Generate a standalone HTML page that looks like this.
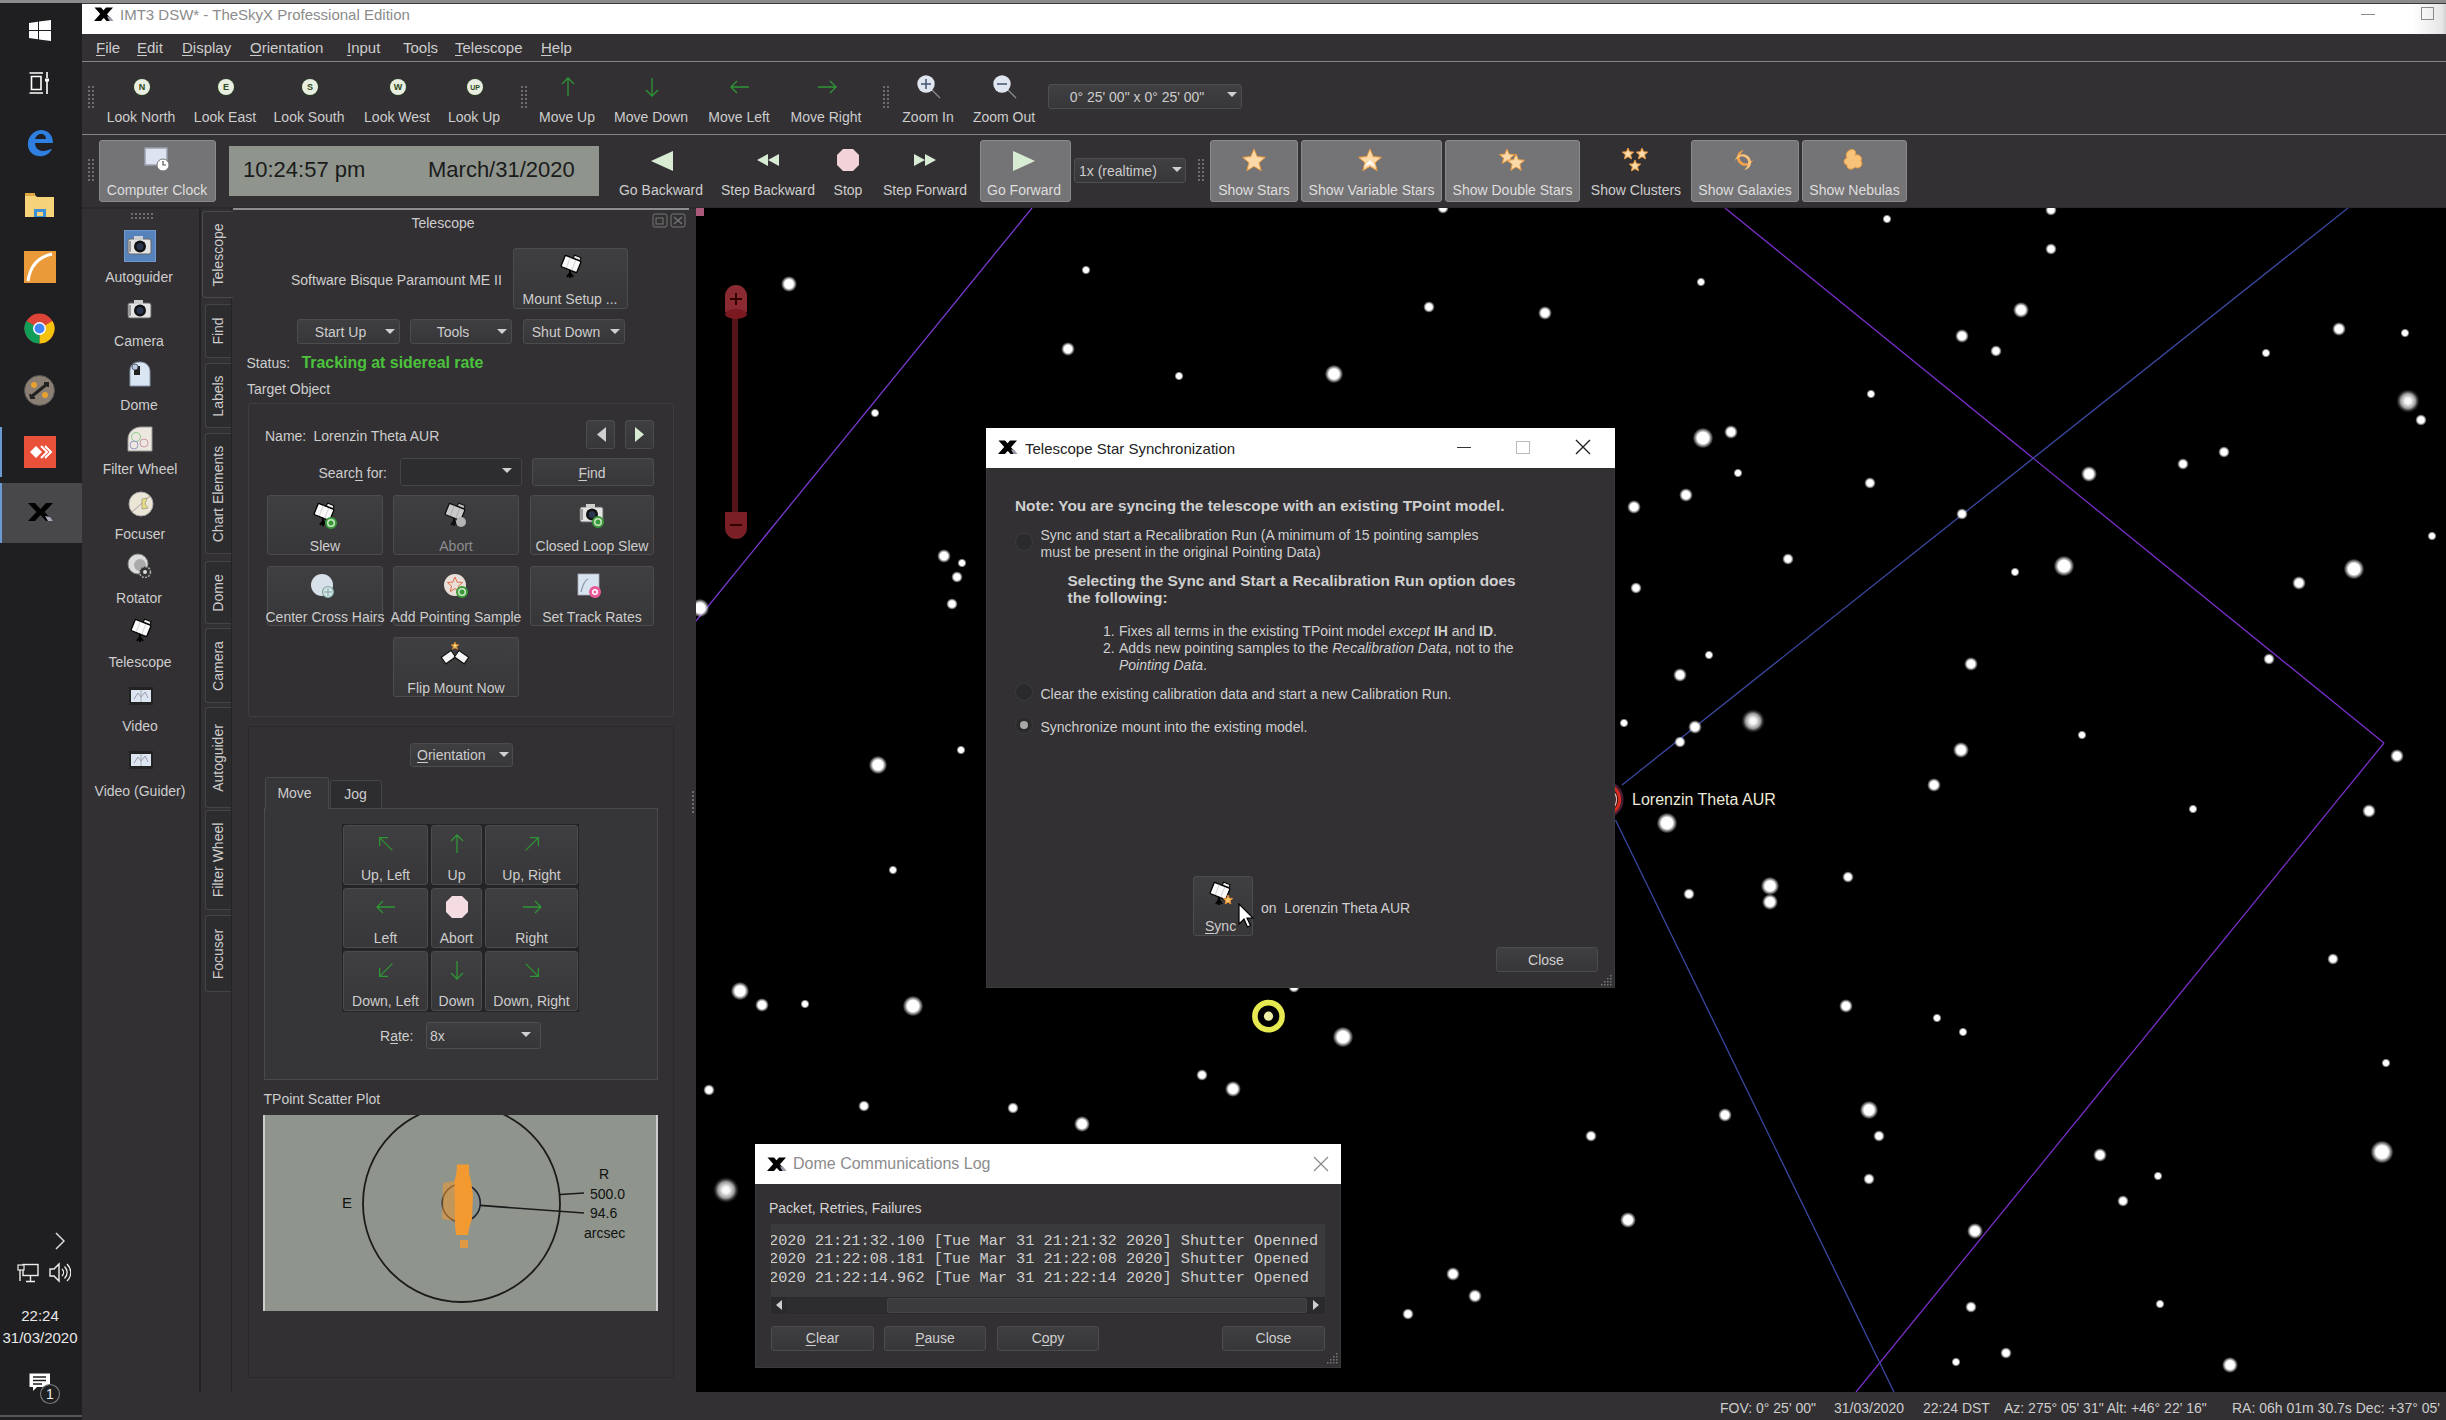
<!DOCTYPE html>
<html><head><meta charset="utf-8">
<style>
*{margin:0;padding:0;box-sizing:border-box}
html,body{width:2446px;height:1420px;overflow:hidden;background:#323033;font-family:"Liberation Sans",sans-serif;color:#d4d4d4}
.a{position:absolute}
.t{position:absolute;white-space:nowrap}
.u{text-decoration:underline;text-underline-offset:2px}
</style></head><body>

<div class="a" style="left:0px;top:0px;width:2446px;height:3px;background:#8b8a8c"></div>
<div class="a" style="left:0px;top:3px;width:82px;height:1417px;background:#1f1e20"></div>
<div class="a" style="left:82px;top:3px;width:2364px;height:31px;background:linear-gradient(to right,#fff 0,#fff 2330px,#e6e6e6 2360px,#d0d0d0 2364px)"></div>
<div class="a" style="left:82px;top:3px;width:2364px;height:1px;background:#3a393b"></div>
<svg class="a" style="left:94px;top:7px;" width="20" height="15" viewBox="0 0 20 15"><path d="M0.5 0.5 L7 0.5 L19 14 L12.5 14 Z" fill="#000"/><path d="M12 0.5 L19 0.5 L7 14 L0 14 Z" fill="#000"/><path d="M13 9.5 L15.5 14 L19.5 14 L16 9.5 Z" fill="#9a9aa8"/></svg>
<div class="t" style="left:120px;top:7.0px;font-size:15px;line-height:15px;color:#8c8c8c;">IMT3 DSW* - TheSkyX Professional Edition</div>
<div class="a" style="left:2361px;top:14px;width:14px;height:1px;background:#8a8a8a"></div>
<div class="a" style="left:2421px;top:7px;width:13px;height:13px;border:1px solid #8a8a8a"></div>
<div class="a" style="left:82px;top:34px;width:2364px;height:27px;background:#323033"></div>
<div class="t" style="left:96px;top:40.0px;font-size:15px;line-height:15px;color:#cdcdcd;"><span class="u">F</span>ile</div>
<div class="t" style="left:137px;top:40.0px;font-size:15px;line-height:15px;color:#cdcdcd;"><span class="u">E</span>dit</div>
<div class="t" style="left:182px;top:40.0px;font-size:15px;line-height:15px;color:#cdcdcd;"><span class="u">D</span>isplay</div>
<div class="t" style="left:250px;top:40.0px;font-size:15px;line-height:15px;color:#cdcdcd;"><span class="u">O</span>rientation</div>
<div class="t" style="left:347px;top:40.0px;font-size:15px;line-height:15px;color:#cdcdcd;"><span class="u">I</span>nput</div>
<div class="t" style="left:403px;top:40.0px;font-size:15px;line-height:15px;color:#cdcdcd;">Too<span class="u">l</span>s</div>
<div class="t" style="left:455px;top:40.0px;font-size:15px;line-height:15px;color:#cdcdcd;"><span class="u">T</span>elescope</div>
<div class="t" style="left:541px;top:40.0px;font-size:15px;line-height:15px;color:#cdcdcd;"><span class="u">H</span>elp</div>
<div class="a" style="left:82px;top:61px;width:2364px;height:1px;background:#858486"></div>
<div class="a" style="left:82px;top:134px;width:2364px;height:1px;background:#858486"></div>
<div class="a" style="left:82px;top:207px;width:2364px;height:2px;background:#2a292b"></div>
<svg class="a" style="left:88px;top:86px;" width="8" height="24" viewBox="0 0 8 24"><rect x="0" y="0" width="2" height="2" fill="#6e6d6f"/><rect x="4" y="0" width="2" height="2" fill="#6e6d6f"/><rect x="0" y="4" width="2" height="2" fill="#6e6d6f"/><rect x="4" y="4" width="2" height="2" fill="#6e6d6f"/><rect x="0" y="8" width="2" height="2" fill="#6e6d6f"/><rect x="4" y="8" width="2" height="2" fill="#6e6d6f"/><rect x="0" y="12" width="2" height="2" fill="#6e6d6f"/><rect x="4" y="12" width="2" height="2" fill="#6e6d6f"/><rect x="0" y="16" width="2" height="2" fill="#6e6d6f"/><rect x="4" y="16" width="2" height="2" fill="#6e6d6f"/><rect x="0" y="20" width="2" height="2" fill="#6e6d6f"/><rect x="4" y="20" width="2" height="2" fill="#6e6d6f"/></svg>
<svg class="a" style="left:132px;top:77px;" width="20" height="20" viewBox="0 0 20 20"><circle cx="10" cy="10" r="9" fill="#2a4a22" opacity="0.6"/><circle cx="10" cy="10" r="8" fill="#e8eee0"/><text x="10" y="13.3" text-anchor="middle" font-family="Liberation Sans" font-weight="bold" font-size="9" fill="#2d4a22">N</text></svg>
<div class="t" style="left:141px;top:110.0px;font-size:14px;line-height:14px;color:#cdcdcd;transform:translateX(-50%);">Look North</div>
<svg class="a" style="left:216px;top:77px;" width="20" height="20" viewBox="0 0 20 20"><circle cx="10" cy="10" r="9" fill="#2a4a22" opacity="0.6"/><circle cx="10" cy="10" r="8" fill="#e8eee0"/><text x="10" y="13.3" text-anchor="middle" font-family="Liberation Sans" font-weight="bold" font-size="9" fill="#2d4a22">E</text></svg>
<div class="t" style="left:225px;top:110.0px;font-size:14px;line-height:14px;color:#cdcdcd;transform:translateX(-50%);">Look East</div>
<svg class="a" style="left:300px;top:77px;" width="20" height="20" viewBox="0 0 20 20"><circle cx="10" cy="10" r="9" fill="#2a4a22" opacity="0.6"/><circle cx="10" cy="10" r="8" fill="#e8eee0"/><text x="10" y="13.3" text-anchor="middle" font-family="Liberation Sans" font-weight="bold" font-size="9" fill="#2d4a22">S</text></svg>
<div class="t" style="left:309px;top:110.0px;font-size:14px;line-height:14px;color:#cdcdcd;transform:translateX(-50%);">Look South</div>
<svg class="a" style="left:388px;top:77px;" width="20" height="20" viewBox="0 0 20 20"><circle cx="10" cy="10" r="9" fill="#2a4a22" opacity="0.6"/><circle cx="10" cy="10" r="8" fill="#e8eee0"/><text x="10" y="13.3" text-anchor="middle" font-family="Liberation Sans" font-weight="bold" font-size="9" fill="#2d4a22">W</text></svg>
<div class="t" style="left:397px;top:110.0px;font-size:14px;line-height:14px;color:#cdcdcd;transform:translateX(-50%);">Look West</div>
<svg class="a" style="left:465px;top:77px;" width="20" height="20" viewBox="0 0 20 20"><circle cx="10" cy="10" r="9" fill="#2a4a22" opacity="0.6"/><circle cx="10" cy="10" r="8" fill="#e8eee0"/><text x="10" y="12.6" text-anchor="middle" font-family="Liberation Sans" font-weight="bold" font-size="7" fill="#2d4a22">UP</text></svg>
<div class="t" style="left:474px;top:110.0px;font-size:14px;line-height:14px;color:#cdcdcd;transform:translateX(-50%);">Look Up</div>
<svg class="a" style="left:521px;top:86px;" width="8" height="24" viewBox="0 0 8 24"><rect x="0" y="0" width="2" height="2" fill="#6e6d6f"/><rect x="4" y="0" width="2" height="2" fill="#6e6d6f"/><rect x="0" y="4" width="2" height="2" fill="#6e6d6f"/><rect x="4" y="4" width="2" height="2" fill="#6e6d6f"/><rect x="0" y="8" width="2" height="2" fill="#6e6d6f"/><rect x="4" y="8" width="2" height="2" fill="#6e6d6f"/><rect x="0" y="12" width="2" height="2" fill="#6e6d6f"/><rect x="4" y="12" width="2" height="2" fill="#6e6d6f"/><rect x="0" y="16" width="2" height="2" fill="#6e6d6f"/><rect x="4" y="16" width="2" height="2" fill="#6e6d6f"/><rect x="0" y="20" width="2" height="2" fill="#6e6d6f"/><rect x="4" y="20" width="2" height="2" fill="#6e6d6f"/></svg>
<svg class="a" style="left:557.0px;top:76.0px;" width="22" height="22" viewBox="0 0 22 22"><g transform="rotate(0 11.0 11.0)" stroke="#2f9636" stroke-width="1.3" fill="none"><path d="M11.0 20 L11.0 2 M5.0 8 L11.0 2 L17.0 8"/></g></svg>
<div class="t" style="left:567px;top:110.0px;font-size:14px;line-height:14px;color:#cdcdcd;transform:translateX(-50%);">Move Up</div>
<svg class="a" style="left:641.0px;top:76.0px;" width="22" height="22" viewBox="0 0 22 22"><g transform="rotate(180 11.0 11.0)" stroke="#2f9636" stroke-width="1.3" fill="none"><path d="M11.0 20 L11.0 2 M5.0 8 L11.0 2 L17.0 8"/></g></svg>
<div class="t" style="left:651px;top:110.0px;font-size:14px;line-height:14px;color:#cdcdcd;transform:translateX(-50%);">Move Down</div>
<svg class="a" style="left:729.0px;top:76.0px;" width="22" height="22" viewBox="0 0 22 22"><g transform="rotate(270 11.0 11.0)" stroke="#2f9636" stroke-width="1.3" fill="none"><path d="M11.0 20 L11.0 2 M5.0 8 L11.0 2 L17.0 8"/></g></svg>
<div class="t" style="left:739px;top:110.0px;font-size:14px;line-height:14px;color:#cdcdcd;transform:translateX(-50%);">Move Left</div>
<svg class="a" style="left:816.0px;top:76.0px;" width="22" height="22" viewBox="0 0 22 22"><g transform="rotate(90 11.0 11.0)" stroke="#2f9636" stroke-width="1.3" fill="none"><path d="M11.0 20 L11.0 2 M5.0 8 L11.0 2 L17.0 8"/></g></svg>
<div class="t" style="left:826px;top:110.0px;font-size:14px;line-height:14px;color:#cdcdcd;transform:translateX(-50%);">Move Right</div>
<svg class="a" style="left:883px;top:86px;" width="8" height="24" viewBox="0 0 8 24"><rect x="0" y="0" width="2" height="2" fill="#6e6d6f"/><rect x="4" y="0" width="2" height="2" fill="#6e6d6f"/><rect x="0" y="4" width="2" height="2" fill="#6e6d6f"/><rect x="4" y="4" width="2" height="2" fill="#6e6d6f"/><rect x="0" y="8" width="2" height="2" fill="#6e6d6f"/><rect x="4" y="8" width="2" height="2" fill="#6e6d6f"/><rect x="0" y="12" width="2" height="2" fill="#6e6d6f"/><rect x="4" y="12" width="2" height="2" fill="#6e6d6f"/><rect x="0" y="16" width="2" height="2" fill="#6e6d6f"/><rect x="4" y="16" width="2" height="2" fill="#6e6d6f"/><rect x="0" y="20" width="2" height="2" fill="#6e6d6f"/><rect x="4" y="20" width="2" height="2" fill="#6e6d6f"/></svg>
<svg class="a" style="left:915.5px;top:73.7px;" width="26" height="26" viewBox="0 0 26 26"><line x1="16" y1="16" x2="24" y2="24" stroke="#8a8a8a" stroke-width="1.2"/><circle cx="10" cy="10" r="8.7" fill="#dfe6ef"/><line x1="5" y1="10" x2="15" y2="10" stroke="#4a5a78" stroke-width="1.6"/><line x1="10" y1="5" x2="10" y2="15" stroke="#4a5a78" stroke-width="1.6"/></svg>
<div class="t" style="left:928px;top:110.0px;font-size:14px;line-height:14px;color:#cdcdcd;transform:translateX(-50%);">Zoom In</div>
<svg class="a" style="left:991.5px;top:73.7px;" width="26" height="26" viewBox="0 0 26 26"><line x1="16" y1="16" x2="24" y2="24" stroke="#8a8a8a" stroke-width="1.2"/><circle cx="10" cy="10" r="8.7" fill="#dfe6ef"/><line x1="5" y1="10" x2="15" y2="10" stroke="#4a5a78" stroke-width="1.6"/></svg>
<div class="t" style="left:1004px;top:110.0px;font-size:14px;line-height:14px;color:#cdcdcd;transform:translateX(-50%);">Zoom Out</div>
<div class="a" style="left:1048px;top:84px;width:194px;height:25px;background:linear-gradient(#403f41,#373638);border:1px solid #4e4d4f;border-radius:3px"></div>
<div class="t" style="left:1137px;top:90.0px;font-size:14px;line-height:14px;color:#cdcdcd;transform:translateX(-50%);">0° 25' 00" x 0° 25' 00"</div>
<svg class="a" style="left:1227px;top:92px;" width="10" height="6" viewBox="0 0 10 6"><path d="M0 0 L10 0 L5 5 Z" fill="#cfcfcf"/></svg>
<svg class="a" style="left:88px;top:159px;" width="8" height="24" viewBox="0 0 8 24"><rect x="0" y="0" width="2" height="2" fill="#6e6d6f"/><rect x="4" y="0" width="2" height="2" fill="#6e6d6f"/><rect x="0" y="4" width="2" height="2" fill="#6e6d6f"/><rect x="4" y="4" width="2" height="2" fill="#6e6d6f"/><rect x="0" y="8" width="2" height="2" fill="#6e6d6f"/><rect x="4" y="8" width="2" height="2" fill="#6e6d6f"/><rect x="0" y="12" width="2" height="2" fill="#6e6d6f"/><rect x="4" y="12" width="2" height="2" fill="#6e6d6f"/><rect x="0" y="16" width="2" height="2" fill="#6e6d6f"/><rect x="4" y="16" width="2" height="2" fill="#6e6d6f"/><rect x="0" y="20" width="2" height="2" fill="#6e6d6f"/><rect x="4" y="20" width="2" height="2" fill="#6e6d6f"/></svg>
<div class="a" style="left:99px;top:140px;width:117px;height:62px;background:#747375;border:1px solid #8a898b;border-radius:3px"></div>
<svg class="a" style="left:144px;top:147px;" width="28" height="26" viewBox="0 0 28 26"><rect x="1" y="1" width="22" height="17" fill="#dde3f0" stroke="#9aa0ad" stroke-width="1.5"/><circle cx="19" cy="18" r="6" fill="#fff" stroke="#777" stroke-width="1"/><path d="M19 14 L19 18 L22 18" stroke="#555" stroke-width="1.2" fill="none"/></svg>
<div class="t" style="left:157px;top:183.0px;font-size:14px;line-height:14px;color:#dedede;transform:translateX(-50%);">Computer Clock</div>
<div class="a" style="left:229px;top:146px;width:370px;height:50px;background:#8f958d"></div>
<div class="t" style="left:243px;top:159.0px;font-size:22px;line-height:22px;color:#1b1b1b;">10:24:57 pm</div>
<div class="t" style="left:428px;top:159.0px;font-size:22px;line-height:22px;color:#1b1b1b;">March/31/2020</div>
<svg class="a" style="left:650px;top:150px;" width="24" height="22" viewBox="0 0 24 22"><path d="M23 1 L23 21 L1 11 Z" fill="#d8ecd4"/></svg>
<div class="t" style="left:661px;top:183.0px;font-size:14px;line-height:14px;color:#cdcdcd;transform:translateX(-50%);">Go Backward</div>
<svg class="a" style="left:756px;top:153px;" width="24" height="14" viewBox="0 0 24 14"><path d="M12 1 L12 13 L1 7 Z M23 1 L23 13 L12 7 Z" fill="#d8ecd4"/></svg>
<div class="t" style="left:768px;top:183.0px;font-size:14px;line-height:14px;color:#cdcdcd;transform:translateX(-50%);">Step Backward</div>
<svg class="a" style="left:836px;top:148px;" width="24" height="24" viewBox="0 0 24 24"><path d="M7 1 L17 1 L23 7 L23 17 L17 23 L7 23 L1 17 L1 7 Z" fill="#f4d2da"/></svg>
<div class="t" style="left:848px;top:183.0px;font-size:14px;line-height:14px;color:#cdcdcd;transform:translateX(-50%);">Stop</div>
<svg class="a" style="left:913px;top:153px;" width="24" height="14" viewBox="0 0 24 14"><path d="M1 1 L1 13 L12 7 Z M12 1 L12 13 L23 7 Z" fill="#d8ecd4"/></svg>
<div class="t" style="left:925px;top:183.0px;font-size:14px;line-height:14px;color:#cdcdcd;transform:translateX(-50%);">Step Forward</div>
<div class="a" style="left:980px;top:140px;width:91px;height:62px;background:#747375;border:1px solid #8a898b;border-radius:3px"></div>
<svg class="a" style="left:1012px;top:150px;" width="24" height="22" viewBox="0 0 24 22"><path d="M1 1 L1 21 L23 11 Z" fill="#d8ecd4"/></svg>
<div class="t" style="left:1024px;top:183.0px;font-size:14px;line-height:14px;color:#dedede;transform:translateX(-50%);">Go Forward</div>
<div class="a" style="left:1074px;top:158px;width:112px;height:25px;background:linear-gradient(#403f41,#373638);border:1px solid #4e4d4f;border-radius:3px"></div>
<div class="t" style="left:1079px;top:163.5px;font-size:14px;line-height:14px;color:#cdcdcd;">1x (realtime)</div>
<svg class="a" style="left:1172px;top:167px;" width="10" height="6" viewBox="0 0 10 6"><path d="M0 0 L10 0 L5 5 Z" fill="#cfcfcf"/></svg>
<svg class="a" style="left:1198px;top:159px;" width="8" height="24" viewBox="0 0 8 24"><rect x="0" y="0" width="2" height="2" fill="#6e6d6f"/><rect x="4" y="0" width="2" height="2" fill="#6e6d6f"/><rect x="0" y="4" width="2" height="2" fill="#6e6d6f"/><rect x="4" y="4" width="2" height="2" fill="#6e6d6f"/><rect x="0" y="8" width="2" height="2" fill="#6e6d6f"/><rect x="4" y="8" width="2" height="2" fill="#6e6d6f"/><rect x="0" y="12" width="2" height="2" fill="#6e6d6f"/><rect x="4" y="12" width="2" height="2" fill="#6e6d6f"/><rect x="0" y="16" width="2" height="2" fill="#6e6d6f"/><rect x="4" y="16" width="2" height="2" fill="#6e6d6f"/><rect x="0" y="20" width="2" height="2" fill="#6e6d6f"/><rect x="4" y="20" width="2" height="2" fill="#6e6d6f"/></svg>
<div class="a" style="left:1210px;top:140px;width:88px;height:62px;background:#747375;border:1px solid #8a898b;border-radius:3px"></div>
<div class="t" style="left:1254.0px;top:183.0px;font-size:14px;line-height:14px;color:#dedede;transform:translateX(-50%);">Show Stars</div>
<div class="a" style="left:1301px;top:140px;width:141px;height:62px;background:#747375;border:1px solid #8a898b;border-radius:3px"></div>
<div class="t" style="left:1371.5px;top:183.0px;font-size:14px;line-height:14px;color:#dedede;transform:translateX(-50%);">Show Variable Stars</div>
<div class="a" style="left:1445px;top:140px;width:135px;height:62px;background:#747375;border:1px solid #8a898b;border-radius:3px"></div>
<div class="t" style="left:1512.5px;top:183.0px;font-size:14px;line-height:14px;color:#dedede;transform:translateX(-50%);">Show Double Stars</div>
<div class="t" style="left:1636.0px;top:183.0px;font-size:14px;line-height:14px;color:#cdcdcd;transform:translateX(-50%);">Show Clusters</div>
<div class="a" style="left:1691px;top:140px;width:108px;height:62px;background:#747375;border:1px solid #8a898b;border-radius:3px"></div>
<div class="t" style="left:1745.0px;top:183.0px;font-size:14px;line-height:14px;color:#dedede;transform:translateX(-50%);">Show Galaxies</div>
<div class="a" style="left:1802px;top:140px;width:105px;height:62px;background:#747375;border:1px solid #8a898b;border-radius:3px"></div>
<div class="t" style="left:1854.5px;top:183.0px;font-size:14px;line-height:14px;color:#dedede;transform:translateX(-50%);">Show Nebulas</div>
<svg class="a" style="left:1241px;top:147px;" width="26" height="26" viewBox="0 0 26 26"><polygon points="13.0,2.0 16.2,9.6 24.4,10.3 18.1,15.7 20.1,23.7 13.0,19.4 5.9,23.7 7.9,15.7 1.6,10.3 9.8,9.6" fill="#fbd9a8" stroke="#e89a40" stroke-width="1"/></svg>
<svg class="a" style="left:1357px;top:147px;" width="26" height="26" viewBox="0 0 26 26"><polygon points="13.0,2.0 16.2,9.6 24.4,10.3 18.1,15.7 20.1,23.7 13.0,19.4 5.9,23.7 7.9,15.7 1.6,10.3 9.8,9.6" fill="#fbd9a8" stroke="#e89a40" stroke-width="1"/><path d="M6 20 L13 13 L19 20 L13 17 Z" fill="#fff"/></svg>
<svg class="a" style="left:1498px;top:147px;" width="28" height="26" viewBox="0 0 28 26"><polygon points="9.0,2.0 11.1,7.1 16.6,7.5 12.4,11.1 13.7,16.5 9.0,13.6 4.3,16.5 5.6,11.1 1.4,7.5 6.9,7.1" fill="#fbd9a8" stroke="#e89a40" stroke-width="1"/><polygon points="18.0,7.0 20.4,12.7 26.6,13.2 21.9,17.3 23.3,23.3 18.0,20.1 12.7,23.3 14.1,17.3 9.4,13.2 15.6,12.7" fill="#fbd9a8" stroke="#e89a40" stroke-width="1"/></svg>
<svg class="a" style="left:1621px;top:147px;" width="28" height="26" viewBox="0 0 28 26"><polygon points="7.0,1.0 8.6,4.8 12.7,5.1 9.6,7.8 10.5,11.9 7.0,9.7 3.5,11.9 4.4,7.8 1.3,5.1 5.4,4.8" fill="#fbd9a8" stroke="#e89a40" stroke-width="1"/><polygon points="21.0,1.0 22.6,4.8 26.7,5.1 23.6,7.8 24.5,11.9 21.0,9.7 17.5,11.9 18.4,7.8 15.3,5.1 19.4,4.8" fill="#fbd9a8" stroke="#e89a40" stroke-width="1"/><polygon points="14.0,13.0 15.6,16.8 19.7,17.1 16.6,19.8 17.5,23.9 14.0,21.7 10.5,23.9 11.4,19.8 8.3,17.1 12.4,16.8" fill="#fbd9a8" stroke="#e89a40" stroke-width="1"/></svg>
<svg class="a" style="left:1731px;top:147px;" width="26" height="26" viewBox="0 0 26 26"><path d="M13 3 C5 4 4 13 9 17 C14 21 21 18 22 12 C20 16 15 18 11 15 C7 12 9 6 13 3 Z" fill="#f5a34a"/><path d="M13 23 C21 22 22 13 17 9 C12 5 5 8 4 14 C6 10 11 8 15 11 C19 14 17 20 13 23 Z" fill="#f7c27a"/></svg>
<svg class="a" style="left:1840px;top:147px;" width="26" height="26" viewBox="0 0 26 26"><path d="M10 3 C14 1 17 5 15 8 C19 7 23 10 21 14 C24 18 19 23 15 20 C12 24 6 22 7 18 C3 17 3 12 7 11 C5 8 7 4 10 3 Z" fill="#f7c27a" stroke="#e89a40" stroke-width="1"/></svg>
<svg class="a" style="left:29px;top:20px;" width="22" height="21" viewBox="0 0 22 21"><path d="M0 3 L9 1.8 L9 10 L0 10 Z M10 1.6 L22 0 L22 10 L10 10 Z M0 11 L9 11 L9 19.2 L0 18 Z M10 11 L22 11 L22 21 L10 19.4 Z" fill="#fff"/></svg>
<svg class="a" style="left:29px;top:72px;" width="22" height="22" viewBox="0 0 22 22"><path d="M0.5 1 L14 1 M0.5 21 L14 21 M2.5 4.5 L12 4.5 L12 17.5 L2.5 17.5 Z M18 0 L18 6 M18 9 L18 22" stroke="#fff" stroke-width="1.6" fill="none"/><rect x="16" y="6.5" width="4" height="3" fill="#fff"/></svg>
<svg class="a" style="left:26px;top:128px;" width="28" height="30" viewBox="0 0 28 30"><path d="M26 21 C23 27 17 29 12 28 C5 27 1 21 2 14 C3 7 9 2 15 2 C22 2 27 7 27 15 L9 15 C9 20 13 23 17 23 C21 23 24 21 26 21 Z M9 11 L20 11 C20 8 18 6 15 6 C12 6 10 8 9 11 Z" fill="#2f7fe0"/></svg>
<svg class="a" style="left:25px;top:193px;" width="29" height="25" viewBox="0 0 29 25"><path d="M0 2 L10 2 L12 4 L29 4 L29 24 L0 24 Z" fill="#f6d27a"/><rect x="0" y="0" width="10" height="3" fill="#e0a840"/><rect x="9" y="16" width="12" height="8" fill="#3c8fd8"/><rect x="12" y="19" width="6" height="4" fill="#f6d27a"/></svg>
<svg class="a" style="left:24px;top:251px;" width="32" height="32" viewBox="0 0 32 32"><rect width="32" height="32" fill="#eb9a3a"/><path d="M4 30 C6 16 14 6 28 3" stroke="#fff" stroke-width="3" fill="none"/></svg>
<svg class="a" style="left:24px;top:313px;" width="31" height="31" viewBox="0 0 31 31"><circle cx="15.5" cy="15.5" r="15" fill="#db4437"/><path d="M15.5 15.5 L28.5 8 A15 15 0 0 1 15.5 30.5 Z" fill="#f4c20d"/><path d="M15.5 15.5 L15.5 30.5 A15 15 0 0 1 2.5 8 Z" fill="#0f9d58"/><circle cx="15.5" cy="15.5" r="6.5" fill="#fff"/><circle cx="15.5" cy="15.5" r="5" fill="#4285f4"/></svg>
<svg class="a" style="left:24px;top:375px;" width="31" height="31" viewBox="0 0 31 31"><circle cx="15.5" cy="15.5" r="15" fill="#8a7f72" stroke="#555" stroke-width="1"/><path d="M7 22 L23 9" stroke="#222" stroke-width="3"/><path d="M6 19 L7 23 L11 23 M20 8 L24 8 L24 12" stroke="#222" stroke-width="2" fill="none"/><circle cx="10" cy="10" r="3" fill="#e8a030"/><circle cx="21" cy="20" r="3" fill="#e8a030"/></svg>
<div class="a" style="left:0px;top:427px;width:2px;height:50px;background:#6a9ad0"></div>
<svg class="a" style="left:24px;top:436px;" width="32" height="32" viewBox="0 0 32 32"><rect width="32" height="32" fill="#e8503a"/><path d="M6 16 L12 10 L18 16 L12 22 Z" fill="#fff"/><path d="M17 10 L23 16 L17 22 M21 10 L27 16 L21 22" stroke="#fff" stroke-width="2" fill="none"/></svg>
<div class="a" style="left:0px;top:483px;width:82px;height:60px;background:#48474a"></div>
<div class="a" style="left:0px;top:483px;width:2px;height:60px;background:#6a9ad0"></div>
<svg class="a" style="left:27px;top:502px;" width="27" height="20" viewBox="0 0 27 20"><path d="M1 1 L8 1 L13.5 7 L19 1 L26 1 L17.5 10 L26 19 L19 19 L13.5 13 L8 19 L1 19 L9.5 10 Z" fill="#000"/><path d="M18 14 L21 19 L26 19 L23 15 Z" fill="#aab"/></svg>
<svg class="a" style="left:55px;top:1232px;" width="10" height="18" viewBox="0 0 10 18"><path d="M1 1 L9 9 L1 17" stroke="#ddd" stroke-width="1.5" fill="none"/></svg>
<svg class="a" style="left:17px;top:1263px;" width="23" height="20" viewBox="0 0 23 20"><rect x="6" y="1.5" width="15" height="11" stroke="#eee" stroke-width="1.4" fill="none"/><path d="M13.5 13 L13.5 18 M9 18.5 L18 18.5 M3 3 L3 18" stroke="#eee" stroke-width="1.4"/><rect x="1" y="2" width="6" height="5" fill="#1f1e20" stroke="#eee" stroke-width="1.2"/></svg>
<svg class="a" style="left:48px;top:1262px;" width="23" height="21" viewBox="0 0 23 21"><path d="M2 7 L6 7 L11 2 L11 19 L6 14 L2 14 Z" stroke="#eee" stroke-width="1.4" fill="none"/><path d="M14 7 C16 9 16 12 14 14 M16.5 4.5 C20 8 20 13 16.5 16.5 M19 2 C24 7 24 14 19 19" stroke="#eee" stroke-width="1.3" fill="none"/></svg>
<div class="t" style="left:40px;top:1307.5px;font-size:15px;line-height:15px;color:#e8e8e8;transform:translateX(-50%);">22:24</div>
<div class="t" style="left:40px;top:1329.5px;font-size:15px;line-height:15px;color:#e8e8e8;transform:translateX(-50%);">31/03/2020</div>
<svg class="a" style="left:28px;top:1372px;" width="36" height="36" viewBox="0 0 36 36"><path d="M1.5 1.5 L22 1.5 L22 15 L9 15 L5 19 L5 15 L1.5 15 Z" fill="#fff"/><path d="M5 5 L18 5 M5 8.5 L18 8.5 M5 12 L14 12" stroke="#1f1e20" stroke-width="1.3"/><circle cx="22" cy="22" r="9.5" fill="#1f1e20" stroke="#777" stroke-width="1.2"/><text x="22" y="27" text-anchor="middle" font-family="Liberation Sans" font-size="14" fill="#eee">1</text></svg>
<div class="a" style="left:0px;top:1415px;width:82px;height:2px;background:#555"></div>
<div class="a" style="left:82px;top:1392px;width:2364px;height:28px;background:#323033"></div>
<div class="t" style="left:1720px;top:1401.0px;font-size:14px;line-height:14px;color:#cdcdcd;">FOV: 0° 25' 00"</div>
<div class="t" style="left:1834px;top:1401.0px;font-size:14px;line-height:14px;color:#cdcdcd;">31/03/2020</div>
<div class="t" style="left:1923px;top:1401.0px;font-size:14px;line-height:14px;color:#cdcdcd;">22:24 DST</div>
<div class="t" style="left:2004px;top:1401.0px;font-size:14px;line-height:14px;color:#cdcdcd;">Az: 275° 05' 31" Alt: +46° 22' 16"</div>
<div class="t" style="left:2232px;top:1401.0px;font-size:14px;line-height:14px;color:#cdcdcd;">RA: 06h 01m 30.7s Dec: +37° 05'</div>
<div class="a" style="left:199px;top:209px;width:2px;height:1183px;background:#222123"></div>
<svg class="a" style="left:131px;top:213px;" width="24" height="8" viewBox="0 0 24 8"><rect x="0" y="0" width="2" height="2" fill="#6e6d6f"/><rect x="4" y="0" width="2" height="2" fill="#6e6d6f"/><rect x="8" y="0" width="2" height="2" fill="#6e6d6f"/><rect x="12" y="0" width="2" height="2" fill="#6e6d6f"/><rect x="16" y="0" width="2" height="2" fill="#6e6d6f"/><rect x="20" y="0" width="2" height="2" fill="#6e6d6f"/><rect x="0" y="4" width="2" height="2" fill="#6e6d6f"/><rect x="4" y="4" width="2" height="2" fill="#6e6d6f"/><rect x="8" y="4" width="2" height="2" fill="#6e6d6f"/><rect x="12" y="4" width="2" height="2" fill="#6e6d6f"/><rect x="16" y="4" width="2" height="2" fill="#6e6d6f"/><rect x="20" y="4" width="2" height="2" fill="#6e6d6f"/></svg>
<div class="a" style="left:124px;top:230px;width:32px;height:32px;background:#5683bc;border:1px solid #6f99cc"></div>
<svg class="a" style="left:127px;top:234px;" width="26" height="22" viewBox="0 0 26 22"><g transform="translate(0,1)"><rect x="1" y="4" width="23" height="15" rx="2" fill="#e4e4e4" stroke="#666" stroke-width="1"/><rect x="7" y="1" width="9" height="4" fill="#cfcfcf"/><circle cx="13" cy="11.5" r="6" fill="#111"/><circle cx="13" cy="11.5" r="3.5" fill="#2a3550"/><rect x="1" y="6" width="3" height="11" fill="#999"/></g></svg>
<div class="t" style="left:139px;top:269.5px;font-size:14px;line-height:14px;color:#cdcdcd;transform:translateX(-50%);">Autoguider</div>
<svg class="a" style="left:127px;top:298px;" width="26" height="22" viewBox="0 0 26 22"><g transform="translate(0,1)"><rect x="1" y="4" width="23" height="15" rx="2" fill="#e4e4e4" stroke="#666" stroke-width="1"/><rect x="7" y="1" width="9" height="4" fill="#cfcfcf"/><circle cx="13" cy="11.5" r="6" fill="#111"/><circle cx="13" cy="11.5" r="3.5" fill="#2a3550"/><rect x="1" y="6" width="3" height="11" fill="#999"/></g></svg>
<div class="t" style="left:139px;top:333.5px;font-size:14px;line-height:14px;color:#cdcdcd;transform:translateX(-50%);">Camera</div>
<svg class="a" style="left:128px;top:361px;" width="24" height="26" viewBox="0 0 24 26"><path d="M2 25 L2 10 C2 4 6 1 12 1 C18 1 22 5 22 11 L22 25 Z" fill="#dbe6f4" stroke="#8896a8" stroke-width="1"/><rect x="6" y="5" width="6" height="9" fill="#222"/><circle cx="7" cy="6" r="3" fill="#b9c9e0" stroke="#445" stroke-width="0.8"/></svg>
<div class="t" style="left:139px;top:397.5px;font-size:14px;line-height:14px;color:#cdcdcd;transform:translateX(-50%);">Dome</div>
<svg class="a" style="left:127px;top:426px;" width="26" height="26" viewBox="0 0 26 26"><path d="M1 25 L1 13 C1 6 7 1 14 1 L25 1 L25 25 Z" fill="#ece8e0" stroke="#999" stroke-width="1"/><circle cx="9" cy="11" r="4.5" fill="none" stroke="#8c8" stroke-width="1"/><circle cx="17" cy="17" r="4" fill="none" stroke="#c9a" stroke-width="1"/><circle cx="7" cy="19" r="4" fill="none" stroke="#99c" stroke-width="1"/></svg>
<div class="t" style="left:140px;top:461.5px;font-size:14px;line-height:14px;color:#cdcdcd;transform:translateX(-50%);">Filter Wheel</div>
<svg class="a" style="left:128px;top:491px;" width="26" height="26" viewBox="0 0 26 26"><circle cx="13" cy="13" r="12" fill="#ece6d6" stroke="#aaa" stroke-width="1"/><path d="M4 21 L22 5" stroke="#a99" stroke-width="1"/><path d="M14 8 L19 7 L17 13 L20 17 L14 18 Z" fill="#e8e080" stroke="#998" stroke-width="0.8"/></svg>
<div class="t" style="left:140px;top:526.5px;font-size:14px;line-height:14px;color:#cdcdcd;transform:translateX(-50%);">Focuser</div>
<svg class="a" style="left:126px;top:552px;" width="28" height="28" viewBox="0 0 28 28"><circle cx="12" cy="12" r="10" fill="#ddd" stroke="#888" stroke-width="1"/><circle cx="14" cy="13" r="6" fill="#aaa"/><circle cx="19" cy="20" r="5.5" fill="#333" stroke="#aaa" stroke-width="1.5" stroke-dasharray="2 1.2"/><circle cx="19" cy="20" r="2" fill="#ddd"/></svg>
<div class="t" style="left:139px;top:590.5px;font-size:14px;line-height:14px;color:#cdcdcd;transform:translateX(-50%);">Rotator</div>
<svg class="a" style="left:127px;top:616px;" width="28" height="28" viewBox="0 0 28 28"><g transform="translate(1,1)"><path d="M12 17 L12 25 M9 24 L12 20 L15 24" stroke="#000" stroke-width="2" fill="none"/><g transform="rotate(22 13 11)"><rect x="4.5" y="5" width="17" height="12" rx="1" fill="#fafafa" stroke="#000" stroke-width="1.3"/><path d="M10 5.5 L10 16.5 M16 5.5 L16 16.5" stroke="#ccc" stroke-width="0.8"/><rect x="13" y="1.5" width="7" height="3" fill="#eee" stroke="#000" stroke-width="1"/></g></g></svg>
<div class="t" style="left:140px;top:655.0px;font-size:14px;line-height:14px;color:#cdcdcd;transform:translateX(-50%);">Telescope</div>
<svg class="a" style="left:129px;top:687px;" width="24" height="18" viewBox="0 0 24 18"><g transform="translate(0,0)"><rect x="0" y="0" width="24" height="18" fill="#222"/><rect x="2" y="3" width="20" height="12" fill="#dde6f0"/><path d="M5 12 L9 6 L12 10 L16 5 L19 11" stroke="#99a" stroke-width="1" fill="none"/><path d="M12 3 L12 15" stroke="#99a" stroke-width="0.8"/></g></svg>
<div class="t" style="left:140px;top:719.0px;font-size:14px;line-height:14px;color:#cdcdcd;transform:translateX(-50%);">Video</div>
<svg class="a" style="left:129px;top:751px;" width="24" height="18" viewBox="0 0 24 18"><g transform="translate(0,0)"><rect x="0" y="0" width="24" height="18" fill="#222"/><rect x="2" y="3" width="20" height="12" fill="#dde6f0"/><path d="M5 12 L9 6 L12 10 L16 5 L19 11" stroke="#99a" stroke-width="1" fill="none"/><path d="M12 3 L12 15" stroke="#99a" stroke-width="0.8"/></g></svg>
<div class="t" style="left:140px;top:784.0px;font-size:14px;line-height:14px;color:#cdcdcd;transform:translateX(-50%);">Video (Guider)</div>
<div class="a" style="left:231px;top:209px;width:1px;height:1183px;background:#242325"></div>
<div class="a" style="left:202px;top:211px;width:31px;height:87px;background:#323033;border:1px solid #4a494b;border-right:none;border-radius:4px 0 0 4px"></div>
<div class="t" style="left:218px;top:254.5px;font-size:14px;line-height:14px;color:#cdcdcd;transform:translate(-50%,-50%) rotate(-90deg)">Telescope</div>
<div class="a" style="left:205px;top:304px;width:26px;height:54px;background:#2c2b2d;border:1px solid #444345;border-right:none;border-radius:3px 0 0 3px"></div>
<div class="t" style="left:218px;top:331.0px;font-size:14px;line-height:14px;color:#cdcdcd;transform:translate(-50%,-50%) rotate(-90deg)">Find</div>
<div class="a" style="left:205px;top:363px;width:26px;height:65px;background:#2c2b2d;border:1px solid #444345;border-right:none;border-radius:3px 0 0 3px"></div>
<div class="t" style="left:218px;top:395.5px;font-size:14px;line-height:14px;color:#cdcdcd;transform:translate(-50%,-50%) rotate(-90deg)">Labels</div>
<div class="a" style="left:205px;top:433px;width:26px;height:121px;background:#2c2b2d;border:1px solid #444345;border-right:none;border-radius:3px 0 0 3px"></div>
<div class="t" style="left:218px;top:493.5px;font-size:14px;line-height:14px;color:#cdcdcd;transform:translate(-50%,-50%) rotate(-90deg)">Chart Elements</div>
<div class="a" style="left:205px;top:561px;width:26px;height:63px;background:#2c2b2d;border:1px solid #444345;border-right:none;border-radius:3px 0 0 3px"></div>
<div class="t" style="left:218px;top:592.5px;font-size:14px;line-height:14px;color:#cdcdcd;transform:translate(-50%,-50%) rotate(-90deg)">Dome</div>
<div class="a" style="left:205px;top:628px;width:26px;height:75px;background:#2c2b2d;border:1px solid #444345;border-right:none;border-radius:3px 0 0 3px"></div>
<div class="t" style="left:218px;top:665.5px;font-size:14px;line-height:14px;color:#cdcdcd;transform:translate(-50%,-50%) rotate(-90deg)">Camera</div>
<div class="a" style="left:205px;top:707px;width:26px;height:101px;background:#2c2b2d;border:1px solid #444345;border-right:none;border-radius:3px 0 0 3px"></div>
<div class="t" style="left:218px;top:757.5px;font-size:14px;line-height:14px;color:#cdcdcd;transform:translate(-50%,-50%) rotate(-90deg)">Autoguider</div>
<div class="a" style="left:205px;top:810px;width:26px;height:100px;background:#2c2b2d;border:1px solid #444345;border-right:none;border-radius:3px 0 0 3px"></div>
<div class="t" style="left:218px;top:860.0px;font-size:14px;line-height:14px;color:#cdcdcd;transform:translate(-50%,-50%) rotate(-90deg)">Filter Wheel</div>
<div class="a" style="left:205px;top:915px;width:26px;height:77px;background:#2c2b2d;border:1px solid #444345;border-right:none;border-radius:3px 0 0 3px"></div>
<div class="t" style="left:218px;top:953.5px;font-size:14px;line-height:14px;color:#cdcdcd;transform:translate(-50%,-50%) rotate(-90deg)">Focuser</div>
<div class="a" style="left:233px;top:208px;width:456px;height:2px;background:#8d8c8e"></div>
<div class="t" style="left:443px;top:215.5px;font-size:14px;line-height:14px;color:#cdcdcd;transform:translateX(-50%);">Telescope</div>
<svg class="a" style="left:652px;top:213px;" width="34" height="15" viewBox="0 0 34 15"><rect x="1" y="1" width="14" height="13" rx="2" stroke="#777" fill="none"/><rect x="4" y="5" width="7" height="6" stroke="#777" fill="none"/><rect x="19" y="1" width="14" height="13" rx="2" stroke="#777" fill="none"/><path d="M22 4 L30 11 M30 4 L22 11" stroke="#777" stroke-width="1.2"/></svg>
<div class="t" style="left:291px;top:273.0px;font-size:14px;line-height:14px;color:#cdcdcd;">Software Bisque Paramount ME II</div>
<div class="a" style="left:513px;top:248px;width:115px;height:61px;background:linear-gradient(#3f3e40,#373638);border:1px solid #4c4b4d;border-radius:3px;"></div>
<svg class="a" style="left:557px;top:252px;" width="28" height="28" viewBox="0 0 28 28"><g transform="translate(1,1)"><path d="M12 17 L12 25 M9 24 L12 20 L15 24" stroke="#000" stroke-width="2" fill="none"/><g transform="rotate(22 13 11)"><rect x="4.5" y="5" width="17" height="12" rx="1" fill="#fafafa" stroke="#000" stroke-width="1.3"/><path d="M10 5.5 L10 16.5 M16 5.5 L16 16.5" stroke="#ccc" stroke-width="0.8"/><rect x="13" y="1.5" width="7" height="3" fill="#eee" stroke="#000" stroke-width="1"/></g></g></svg>
<div class="t" style="left:570px;top:292.0px;font-size:14px;line-height:14px;color:#cdcdcd;transform:translateX(-50%);">Mount Setup ...</div>
<div class="a" style="left:297px;top:319px;width:103px;height:25px;background:linear-gradient(#3f3e40,#373638);border:1px solid #4c4b4d;border-radius:3px;"></div>
<div class="t" style="left:340.5px;top:325.0px;font-size:14px;line-height:14px;color:#cdcdcd;transform:translateX(-50%);">Start Up</div>
<svg class="a" style="left:385px;top:329px;" width="10" height="6" viewBox="0 0 10 6"><path d="M0 0 L10 0 L5 5 Z" fill="#cfcfcf"/></svg>
<div class="a" style="left:410px;top:319px;width:102px;height:25px;background:linear-gradient(#3f3e40,#373638);border:1px solid #4c4b4d;border-radius:3px;"></div>
<div class="t" style="left:453.0px;top:325.0px;font-size:14px;line-height:14px;color:#cdcdcd;transform:translateX(-50%);">Tools</div>
<svg class="a" style="left:497px;top:329px;" width="10" height="6" viewBox="0 0 10 6"><path d="M0 0 L10 0 L5 5 Z" fill="#cfcfcf"/></svg>
<div class="a" style="left:523px;top:319px;width:102px;height:25px;background:linear-gradient(#3f3e40,#373638);border:1px solid #4c4b4d;border-radius:3px;"></div>
<div class="t" style="left:566.0px;top:325.0px;font-size:14px;line-height:14px;color:#cdcdcd;transform:translateX(-50%);">Shut Down</div>
<svg class="a" style="left:610px;top:329px;" width="10" height="6" viewBox="0 0 10 6"><path d="M0 0 L10 0 L5 5 Z" fill="#cfcfcf"/></svg>
<div class="t" style="left:246.5px;top:355.5px;font-size:14px;line-height:14px;color:#cdcdcd;">Status:</div>
<div class="t" style="left:301.5px;top:354.6px;font-size:15.9px;line-height:15.9px;color:#4cc23c;font-weight:bold">Tracking at sidereal rate</div>
<div class="t" style="left:247px;top:382.0px;font-size:14px;line-height:14px;color:#cdcdcd;">Target Object</div>
<div class="a" style="left:248px;top:403px;width:426px;height:314px;border:1px solid #3d3c3e;border-radius:3px"></div>
<div class="t" style="left:265px;top:428.5px;font-size:14px;line-height:14px;color:#cdcdcd;">Name:</div>
<div class="t" style="left:313.5px;top:428.5px;font-size:14px;line-height:14px;color:#cdcdcd;">Lorenzin Theta AUR</div>
<div class="a" style="left:586px;top:420px;width:29px;height:29px;background:linear-gradient(#3f3e40,#373638);border:1px solid #4c4b4d;border-radius:3px;"></div>
<svg class="a" style="left:595px;top:426px;" width="12" height="17" viewBox="0 0 12 17"><path d="M11 1 L11 16 L2 8.5 Z" fill="#cfcfcf"/></svg>
<div class="a" style="left:625px;top:420px;width:29px;height:29px;background:linear-gradient(#3f3e40,#373638);border:1px solid #4c4b4d;border-radius:3px;"></div>
<svg class="a" style="left:634px;top:426px;" width="12" height="17" viewBox="0 0 12 17"><path d="M1 1 L1 16 L10 8.5 Z" fill="#d8ecd4"/></svg>
<div class="t" style="left:318.5px;top:466.0px;font-size:14px;line-height:14px;color:#cdcdcd;">Searc<span class="u">h</span> for:</div>
<div class="a" style="left:400px;top:458px;width:122px;height:28px;background:#2d2c2e;border:1px solid #444345;border-radius:3px"></div>
<svg class="a" style="left:502px;top:468px;" width="10" height="6" viewBox="0 0 10 6"><path d="M0 0 L10 0 L5 5 Z" fill="#cfcfcf"/></svg>
<div class="a" style="left:532px;top:458px;width:122px;height:28px;background:linear-gradient(#3f3e40,#373638);border:1px solid #4c4b4d;border-radius:3px;"></div>
<div class="t" style="left:592px;top:465.5px;font-size:14px;line-height:14px;color:#cdcdcd;transform:translateX(-50%);"><span class="u">F</span>ind</div>
<div class="a" style="left:267px;top:495px;width:116px;height:60px;background:linear-gradient(#3f3e40,#373638);border:1px solid #4c4b4d;border-radius:3px;"></div>
<div class="t" style="left:325.0px;top:538.5px;font-size:14px;line-height:14px;color:#cdcdcd;transform:translateX(-50%);">Slew</div>
<div class="a" style="left:393px;top:495px;width:126px;height:60px;background:linear-gradient(#3f3e40,#373638);border:1px solid #4c4b4d;border-radius:3px;"></div>
<div class="t" style="left:456.0px;top:538.5px;font-size:14px;line-height:14px;color:#8d8c8e;transform:translateX(-50%);">Abort</div>
<div class="a" style="left:530px;top:495px;width:124px;height:60px;background:linear-gradient(#3f3e40,#373638);border:1px solid #4c4b4d;border-radius:3px;"></div>
<div class="t" style="left:592.0px;top:538.5px;font-size:14px;line-height:14px;color:#cdcdcd;transform:translateX(-50%);">Closed Loop Slew</div>
<div class="a" style="left:267px;top:566px;width:116px;height:60px;background:linear-gradient(#3f3e40,#373638);border:1px solid #4c4b4d;border-radius:3px;"></div>
<div class="t" style="left:325.0px;top:609.5px;font-size:14px;line-height:14px;color:#cdcdcd;transform:translateX(-50%);">Center Cross Hairs</div>
<div class="a" style="left:393px;top:566px;width:126px;height:60px;background:linear-gradient(#3f3e40,#373638);border:1px solid #4c4b4d;border-radius:3px;"></div>
<div class="t" style="left:456.0px;top:609.5px;font-size:14px;line-height:14px;color:#cdcdcd;transform:translateX(-50%);">Add Pointing Sample</div>
<div class="a" style="left:530px;top:566px;width:124px;height:60px;background:linear-gradient(#3f3e40,#373638);border:1px solid #4c4b4d;border-radius:3px;"></div>
<div class="t" style="left:592.0px;top:609.5px;font-size:14px;line-height:14px;color:#cdcdcd;transform:translateX(-50%);">Set Track Rates</div>
<div class="a" style="left:393px;top:637px;width:126px;height:60px;background:linear-gradient(#3f3e40,#373638);border:1px solid #4c4b4d;border-radius:3px;"></div>
<div class="t" style="left:456.0px;top:680.5px;font-size:14px;line-height:14px;color:#cdcdcd;transform:translateX(-50%);">Flip Mount Now</div>
<svg class="a" style="left:311px;top:501px;" width="28" height="28" viewBox="0 0 28 28"><g transform="translate(0,0)"><path d="M12 17 L12 25 M9 24 L12 20 L15 24" stroke="#000" stroke-width="2" fill="none"/><g transform="rotate(22 13 11)"><rect x="4.5" y="5" width="17" height="12" rx="1" fill="#fafafa" stroke="#000" stroke-width="1.3"/><path d="M10 5.5 L10 16.5 M16 5.5 L16 16.5" stroke="#ccc" stroke-width="0.8"/><rect x="13" y="1.5" width="7" height="3" fill="#eee" stroke="#000" stroke-width="1"/></g><circle cx="20" cy="22" r="5" fill="#cfe6c8" stroke="#3a9a3a" stroke-width="2"/><circle cx="20" cy="22" r="2.5" fill="#3a9a3a"/></g></svg>
<svg class="a" style="left:442px;top:501px;" width="28" height="28" viewBox="0 0 28 28"><g opacity="0.75"><g transform="translate(0,0)"><path d="M12 17 L12 25 M9 24 L12 20 L15 24" stroke="#000" stroke-width="2" fill="none"/><g transform="rotate(22 13 11)"><rect x="4.5" y="5" width="17" height="12" rx="1" fill="#fafafa" stroke="#000" stroke-width="1.3"/><path d="M10 5.5 L10 16.5 M16 5.5 L16 16.5" stroke="#ccc" stroke-width="0.8"/><rect x="13" y="1.5" width="7" height="3" fill="#eee" stroke="#000" stroke-width="1"/></g><circle cx="19" cy="21" r="5" fill="#ddd"/></g></g></svg>
<svg class="a" style="left:578px;top:501px;" width="28" height="28" viewBox="0 0 28 28"><g transform="translate(1,2)"><rect x="1" y="4" width="23" height="15" rx="2" fill="#e4e4e4" stroke="#666" stroke-width="1"/><rect x="7" y="1" width="9" height="4" fill="#cfcfcf"/><circle cx="13" cy="11.5" r="6" fill="#111"/><circle cx="13" cy="11.5" r="3.5" fill="#2a3550"/><rect x="1" y="6" width="3" height="11" fill="#999"/></g><circle cx="20" cy="21" r="5" fill="#cfe6c8" stroke="#3a9a3a" stroke-width="2"/><circle cx="20" cy="21" r="2.5" fill="#3a9a3a"/></svg>
<svg class="a" style="left:309px;top:572px;" width="28" height="28" viewBox="0 0 28 28"><circle cx="13" cy="13" r="11" fill="#d8e0ea"/><circle cx="19" cy="20" r="5.5" fill="#d8e0ea" stroke="#7a9" stroke-width="1.2"/><path d="M19 16 L19 24 M15 20 L23 20" stroke="#7a9" stroke-width="1"/></svg>
<svg class="a" style="left:442px;top:572px;" width="28" height="28" viewBox="0 0 28 28"><circle cx="13" cy="13" r="11" fill="#e8e0d8"/><polygon points="13.0,5.0 15.1,10.1 20.6,10.5 16.4,14.1 17.7,19.5 13.0,16.6 8.3,19.5 9.6,14.1 5.4,10.5 10.9,10.1" fill="none" stroke="#e07050" stroke-width="1"/><circle cx="20" cy="20" r="5" fill="#cfe6c8" stroke="#3a9a3a" stroke-width="2"/><circle cx="20" cy="20" r="2.5" fill="#3a9a3a"/></svg>
<svg class="a" style="left:576px;top:572px;" width="28" height="28" viewBox="0 0 28 28"><rect x="2" y="2" width="21" height="21" fill="#d8e4f0" stroke="#aab" stroke-width="0.8"/><path d="M5 20 C7 12 9 8 12 7" stroke="#8896a8" stroke-width="1.2" fill="none"/><circle cx="19" cy="20" r="6" fill="#e85a9a"/><circle cx="19" cy="20" r="3" fill="#fff"/><circle cx="19" cy="20" r="1.5" fill="#e85a9a"/></svg>
<svg class="a" style="left:440px;top:640px;" width="30" height="26" viewBox="0 0 30 26"><polygon points="15.0,2.0 16.1,4.5 18.8,4.8 16.7,6.6 17.4,9.2 15.0,7.8 12.6,9.2 13.3,6.6 11.2,4.8 13.9,4.5" fill="#f3d070" stroke="#d08030" stroke-width="1"/><g transform="rotate(-35 9 18)"><rect x="3" y="13" width="12" height="8" fill="#f4f4f4" stroke="#111" stroke-width="1.2"/></g><g transform="rotate(35 21 18)"><rect x="15" y="13" width="12" height="8" fill="#f4f4f4" stroke="#111" stroke-width="1.2"/></g></svg>
<div class="a" style="left:248px;top:726px;width:426px;height:652px;border:1px solid #29282a;border-radius:2px"></div>
<div class="a" style="left:410px;top:743px;width:103px;height:24px;background:linear-gradient(#3f3e40,#373638);border:1px solid #4c4b4d;border-radius:3px;"></div>
<div class="t" style="left:417px;top:748.0px;font-size:14px;line-height:14px;color:#cdcdcd;"><span class="u">O</span>rientation</div>
<svg class="a" style="left:499px;top:752px;" width="10" height="6" viewBox="0 0 10 6"><path d="M0 0 L10 0 L5 5 Z" fill="#cfcfcf"/></svg>
<div class="a" style="left:264px;top:808px;width:394px;height:272px;background:#363537;border:1px solid #4a494b"></div>
<div class="a" style="left:265px;top:777px;width:64px;height:32px;background:#363537;border:1px solid #4a494b;border-bottom:none;border-radius:3px 3px 0 0"></div>
<div class="t" style="left:294.5px;top:786.0px;font-size:14px;line-height:14px;color:#cdcdcd;transform:translateX(-50%);">Move</div>
<div class="a" style="left:330px;top:780px;width:52px;height:28px;background:#2d2c2e;border:1px solid #444345;border-bottom:none;border-radius:3px 3px 0 0"></div>
<div class="t" style="left:355.5px;top:787.0px;font-size:14px;line-height:14px;color:#cdcdcd;transform:translateX(-50%);">Jog</div>
<div class="a" style="left:342px;top:824px;width:237px;height:188px;background:#242325"></div>
<div class="a" style="left:343px;top:825px;width:85px;height:60px;background:linear-gradient(#3f3e40,#373638);border:1px solid #4c4b4d;border-radius:3px;"></div>
<div class="t" style="left:385.5px;top:867.5px;font-size:14px;line-height:14px;color:#cdcdcd;transform:translateX(-50%);">Up, Left</div>
<svg class="a" style="left:374.5px;top:833.0px;" width="22" height="22" viewBox="0 0 22 22"><g transform="rotate(-45 11.0 11.0)" stroke="#2f9636" stroke-width="1.3" fill="none"><path d="M11.0 20 L11.0 2 M5.0 8 L11.0 2 L17.0 8"/></g></svg>
<div class="a" style="left:431px;top:825px;width:51px;height:60px;background:linear-gradient(#3f3e40,#373638);border:1px solid #4c4b4d;border-radius:3px;"></div>
<div class="t" style="left:456.5px;top:867.5px;font-size:14px;line-height:14px;color:#cdcdcd;transform:translateX(-50%);">Up</div>
<svg class="a" style="left:445.5px;top:833.0px;" width="22" height="22" viewBox="0 0 22 22"><g transform="rotate(0 11.0 11.0)" stroke="#2f9636" stroke-width="1.3" fill="none"><path d="M11.0 20 L11.0 2 M5.0 8 L11.0 2 L17.0 8"/></g></svg>
<div class="a" style="left:485px;top:825px;width:93px;height:60px;background:linear-gradient(#3f3e40,#373638);border:1px solid #4c4b4d;border-radius:3px;"></div>
<div class="t" style="left:531.5px;top:867.5px;font-size:14px;line-height:14px;color:#cdcdcd;transform:translateX(-50%);">Up, Right</div>
<svg class="a" style="left:520.5px;top:833.0px;" width="22" height="22" viewBox="0 0 22 22"><g transform="rotate(45 11.0 11.0)" stroke="#2f9636" stroke-width="1.3" fill="none"><path d="M11.0 20 L11.0 2 M5.0 8 L11.0 2 L17.0 8"/></g></svg>
<div class="a" style="left:343px;top:888px;width:85px;height:60px;background:linear-gradient(#3f3e40,#373638);border:1px solid #4c4b4d;border-radius:3px;"></div>
<div class="t" style="left:385.5px;top:930.5px;font-size:14px;line-height:14px;color:#cdcdcd;transform:translateX(-50%);">Left</div>
<svg class="a" style="left:374.5px;top:896.0px;" width="22" height="22" viewBox="0 0 22 22"><g transform="rotate(-90 11.0 11.0)" stroke="#2f9636" stroke-width="1.3" fill="none"><path d="M11.0 20 L11.0 2 M5.0 8 L11.0 2 L17.0 8"/></g></svg>
<div class="a" style="left:431px;top:888px;width:51px;height:60px;background:linear-gradient(#3f3e40,#373638);border:1px solid #4c4b4d;border-radius:3px;"></div>
<div class="t" style="left:456.5px;top:930.5px;font-size:14px;line-height:14px;color:#cdcdcd;transform:translateX(-50%);">Abort</div>
<svg class="a" style="left:444.5px;top:895px;" width="24" height="24" viewBox="0 0 24 24"><path d="M7 1 L17 1 L23 7 L23 17 L17 23 L7 23 L1 17 L1 7 Z" fill="#f4dce2"/></svg>
<div class="a" style="left:485px;top:888px;width:93px;height:60px;background:linear-gradient(#3f3e40,#373638);border:1px solid #4c4b4d;border-radius:3px;"></div>
<div class="t" style="left:531.5px;top:930.5px;font-size:14px;line-height:14px;color:#cdcdcd;transform:translateX(-50%);">Right</div>
<svg class="a" style="left:520.5px;top:896.0px;" width="22" height="22" viewBox="0 0 22 22"><g transform="rotate(90 11.0 11.0)" stroke="#2f9636" stroke-width="1.3" fill="none"><path d="M11.0 20 L11.0 2 M5.0 8 L11.0 2 L17.0 8"/></g></svg>
<div class="a" style="left:343px;top:951px;width:85px;height:60px;background:linear-gradient(#3f3e40,#373638);border:1px solid #4c4b4d;border-radius:3px;"></div>
<div class="t" style="left:385.5px;top:993.5px;font-size:14px;line-height:14px;color:#cdcdcd;transform:translateX(-50%);">Down, Left</div>
<svg class="a" style="left:374.5px;top:959.0px;" width="22" height="22" viewBox="0 0 22 22"><g transform="rotate(-135 11.0 11.0)" stroke="#2f9636" stroke-width="1.3" fill="none"><path d="M11.0 20 L11.0 2 M5.0 8 L11.0 2 L17.0 8"/></g></svg>
<div class="a" style="left:431px;top:951px;width:51px;height:60px;background:linear-gradient(#3f3e40,#373638);border:1px solid #4c4b4d;border-radius:3px;"></div>
<div class="t" style="left:456.5px;top:993.5px;font-size:14px;line-height:14px;color:#cdcdcd;transform:translateX(-50%);">Down</div>
<svg class="a" style="left:445.5px;top:959.0px;" width="22" height="22" viewBox="0 0 22 22"><g transform="rotate(180 11.0 11.0)" stroke="#2f9636" stroke-width="1.3" fill="none"><path d="M11.0 20 L11.0 2 M5.0 8 L11.0 2 L17.0 8"/></g></svg>
<div class="a" style="left:485px;top:951px;width:93px;height:60px;background:linear-gradient(#3f3e40,#373638);border:1px solid #4c4b4d;border-radius:3px;"></div>
<div class="t" style="left:531.5px;top:993.5px;font-size:14px;line-height:14px;color:#cdcdcd;transform:translateX(-50%);">Down, Right</div>
<svg class="a" style="left:520.5px;top:959.0px;" width="22" height="22" viewBox="0 0 22 22"><g transform="rotate(135 11.0 11.0)" stroke="#2f9636" stroke-width="1.3" fill="none"><path d="M11.0 20 L11.0 2 M5.0 8 L11.0 2 L17.0 8"/></g></svg>
<div class="t" style="left:380px;top:1029.0px;font-size:14px;line-height:14px;color:#cdcdcd;">R<span class="u">a</span>te:</div>
<div class="a" style="left:426px;top:1022px;width:115px;height:27px;background:linear-gradient(#3e3d3f,#363537);border:1px solid #4e4d4f;border-radius:3px"></div>
<div class="t" style="left:430px;top:1028.5px;font-size:14px;line-height:14px;color:#cdcdcd;">8x</div>
<svg class="a" style="left:521px;top:1032px;" width="10" height="6" viewBox="0 0 10 6"><path d="M0 0 L10 0 L5 5 Z" fill="#cfcfcf"/></svg>
<div class="t" style="left:263.5px;top:1092.0px;font-size:14px;line-height:14px;color:#cdcdcd;">TPoint Scatter Plot</div>
<div class="a" style="left:263px;top:1115px;width:395px;height:196px;background:#8f958c;border-left:2px solid #ccc;border-right:2px solid #ccc"></div>
<svg class="a" style="left:265px;top:1115px;" width="391" height="196" viewBox="0 0 391 196"><circle cx="196.5" cy="88.5" r="98.5" fill="none" stroke="#1a1a1a" stroke-width="1.8"/><defs><radialGradient id="ig"><stop offset="0" stop-color="#7a8a98"/><stop offset="1" stop-color="#8f958c"/></radialGradient></defs><circle cx="196.3" cy="88" r="19" fill="url(#ig)" stroke="#1f2230" stroke-width="1.6"/><path d="M178 68 L190 66 L190 106 L177 104 Z" fill="#f29a30" opacity="0.55"/><path d="M192 49.5 L204 49.5 L204 58 L206 66 L208 80 L207 104 L204 113 L203 120 L191 120 L190 110 L189.5 66 L191.5 58 Z" fill="#f29a30"/><path d="M195 125 L203 125 L203 133 L195 133 Z" fill="#f29a30" opacity="0.8"/><path d="M295 79.5 L319 78 M215.2 90.4 L319 98" stroke="#1a1a1a" stroke-width="1.6"/><text x="77" y="92.5" font-family="Liberation Sans" font-size="15" fill="#111">E</text><text x="334" y="63.6" font-family="Liberation Sans" font-size="14" fill="#111">R</text><text x="325" y="83.7" font-family="Liberation Sans" font-size="14" fill="#111">500.0</text><text x="325" y="103.3" font-family="Liberation Sans" font-size="14" fill="#111">94.6</text><text x="319" y="123.2" font-family="Liberation Sans" font-size="14" fill="#111">arcsec</text></svg>
<div class="a" style="left:696px;top:208px;width:1750px;height:1184px;background:#000"></div>
<svg class="a" style="left:696px;top:208px;overflow:hidden" width="1750" height="1184" viewBox="0 0 1750 1184"><defs><radialGradient id="sg"><stop offset="0" stop-color="#fff"/><stop offset="0.55" stop-color="#fff"/><stop offset="1" stop-color="#fff" stop-opacity="0"/></radialGradient><radialGradient id="sg2"><stop offset="0" stop-color="#fff"/><stop offset="0.25" stop-color="#f4f4f4"/><stop offset="0.6" stop-color="#999"/><stop offset="1" stop-color="#000" stop-opacity="0"/></radialGradient></defs><line x1="336" y1="0" x2="0" y2="413" stroke="#7a3ad0" stroke-width="1.3"/><line x1="1029" y1="0" x2="1688" y2="535" stroke="#7a2ec8" stroke-width="1.3"/><line x1="1688" y1="535" x2="1160" y2="1184" stroke="#7a2ec8" stroke-width="1.3"/><line x1="1652" y1="0" x2="926" y2="577" stroke="#3a48a0" stroke-width="1.3"/><line x1="919.5" y1="612" x2="1198" y2="1184" stroke="#3a48a0" stroke-width="1.3"/><circle cx="93" cy="76" r="8.0" fill="url(#sg)"/><circle cx="179" cy="205" r="4.6" fill="url(#sg)"/><circle cx="248" cy="348" r="6.9" fill="url(#sg)"/><circle cx="266" cy="355" r="4.6" fill="url(#sg)"/><circle cx="261" cy="369" r="5.8" fill="url(#sg)"/><circle cx="256" cy="396" r="5.8" fill="url(#sg)"/><circle cx="182" cy="557" r="9.2" fill="url(#sg)"/><circle cx="265" cy="542" r="4.6" fill="url(#sg)"/><circle cx="197" cy="662" r="4.6" fill="url(#sg)"/><circle cx="44" cy="783" r="9.2" fill="url(#sg)"/><circle cx="66" cy="797" r="6.9" fill="url(#sg)"/><circle cx="109" cy="796" r="4.6" fill="url(#sg)"/><circle cx="217" cy="798" r="10.3" fill="url(#sg)"/><circle cx="13" cy="882" r="5.8" fill="url(#sg)"/><circle cx="168" cy="898" r="5.8" fill="url(#sg)"/><circle cx="317" cy="900" r="5.8" fill="url(#sg)"/><circle cx="386" cy="916" r="8.0" fill="url(#sg)"/><circle cx="506" cy="867" r="5.8" fill="url(#sg)"/><circle cx="537" cy="881" r="8.0" fill="url(#sg)"/><circle cx="647" cy="829" r="10.3" fill="url(#sg)"/><circle cx="30" cy="982" r="13.8" fill="url(#sg2)"/><circle cx="895" cy="928" r="5.8" fill="url(#sg)"/><circle cx="757" cy="1066" r="6.9" fill="url(#sg)"/><circle cx="779" cy="1088" r="6.9" fill="url(#sg)"/><circle cx="712" cy="1106" r="5.8" fill="url(#sg)"/><circle cx="390" cy="62" r="4.6" fill="url(#sg)"/><circle cx="372" cy="141" r="6.9" fill="url(#sg)"/><circle cx="483" cy="168" r="4.6" fill="url(#sg)"/><circle cx="638" cy="166" r="9.2" fill="url(#sg)"/><circle cx="733" cy="99" r="5.8" fill="url(#sg)"/><circle cx="849" cy="105" r="6.9" fill="url(#sg)"/><circle cx="747" cy="0" r="5.8" fill="url(#sg)"/><circle cx="598" cy="779" r="5.8" fill="url(#sg)"/><circle cx="1191" cy="11" r="4.6" fill="url(#sg)"/><circle cx="1355" cy="2" r="5.8" fill="url(#sg)"/><circle cx="1355" cy="41" r="5.8" fill="url(#sg)"/><circle cx="1005" cy="74" r="4.6" fill="url(#sg)"/><circle cx="1325" cy="102" r="8.0" fill="url(#sg)"/><circle cx="1266" cy="128" r="6.9" fill="url(#sg)"/><circle cx="1300" cy="143" r="5.8" fill="url(#sg)"/><circle cx="1643" cy="121" r="6.9" fill="url(#sg)"/><circle cx="1709" cy="125" r="4.6" fill="url(#sg)"/><circle cx="1570" cy="145" r="4.6" fill="url(#sg)"/><circle cx="1175" cy="186" r="4.6" fill="url(#sg)"/><circle cx="1712" cy="193" r="12.6" fill="url(#sg2)"/><circle cx="1725" cy="212" r="5.8" fill="url(#sg)"/><circle cx="1007" cy="230" r="10.3" fill="url(#sg)"/><circle cx="1035" cy="224" r="6.9" fill="url(#sg)"/><circle cx="1042" cy="265" r="4.6" fill="url(#sg)"/><circle cx="990" cy="287" r="6.9" fill="url(#sg)"/><circle cx="938" cy="299" r="6.9" fill="url(#sg)"/><circle cx="1174" cy="275" r="5.8" fill="url(#sg)"/><circle cx="1393" cy="266" r="8.0" fill="url(#sg)"/><circle cx="1487" cy="256" r="5.8" fill="url(#sg)"/><circle cx="1528" cy="244" r="5.8" fill="url(#sg)"/><circle cx="1266" cy="306" r="5.8" fill="url(#sg)"/><circle cx="1736" cy="328" r="4.6" fill="url(#sg)"/><circle cx="1092" cy="351" r="5.8" fill="url(#sg)"/><circle cx="940" cy="380" r="5.8" fill="url(#sg)"/><circle cx="1319" cy="364" r="4.6" fill="url(#sg)"/><circle cx="1368" cy="358" r="10.3" fill="url(#sg)"/><circle cx="1658" cy="361" r="10.3" fill="url(#sg)"/><circle cx="1603" cy="375" r="6.9" fill="url(#sg)"/><circle cx="1013" cy="447" r="4.6" fill="url(#sg)"/><circle cx="984" cy="467" r="6.9" fill="url(#sg)"/><circle cx="1275" cy="456" r="6.9" fill="url(#sg)"/><circle cx="1573" cy="451" r="5.8" fill="url(#sg)"/><circle cx="928" cy="515" r="4.6" fill="url(#sg)"/><circle cx="999" cy="519" r="6.9" fill="url(#sg)"/><circle cx="1057" cy="513" r="12.6" fill="url(#sg2)"/><circle cx="984" cy="534" r="5.8" fill="url(#sg)"/><circle cx="1386" cy="527" r="4.6" fill="url(#sg)"/><circle cx="1265" cy="542" r="8.0" fill="url(#sg)"/><circle cx="1701" cy="548" r="6.9" fill="url(#sg)"/><circle cx="1238" cy="577" r="6.9" fill="url(#sg)"/><circle cx="971" cy="615" r="10.3" fill="url(#sg)"/><circle cx="993" cy="686" r="5.8" fill="url(#sg)"/><circle cx="1074" cy="678" r="9.2" fill="url(#sg)"/><circle cx="1074" cy="694" r="8.0" fill="url(#sg)"/><circle cx="1152" cy="669" r="5.8" fill="url(#sg)"/><circle cx="1497" cy="601" r="4.6" fill="url(#sg)"/><circle cx="1673" cy="603" r="6.9" fill="url(#sg)"/><circle cx="1637" cy="751" r="5.8" fill="url(#sg)"/><circle cx="1150" cy="798" r="6.9" fill="url(#sg)"/><circle cx="1241" cy="810" r="4.6" fill="url(#sg)"/><circle cx="1267" cy="824" r="4.6" fill="url(#sg)"/><circle cx="1690" cy="855" r="4.6" fill="url(#sg)"/><circle cx="1029" cy="907" r="6.9" fill="url(#sg)"/><circle cx="1173" cy="902" r="9.2" fill="url(#sg)"/><circle cx="1183" cy="928" r="5.8" fill="url(#sg)"/><circle cx="1173" cy="971" r="5.8" fill="url(#sg)"/><circle cx="932" cy="1012" r="8.0" fill="url(#sg)"/><circle cx="1279" cy="1023" r="8.0" fill="url(#sg)"/><circle cx="1404" cy="947" r="6.9" fill="url(#sg)"/><circle cx="1462" cy="968" r="4.6" fill="url(#sg)"/><circle cx="1427" cy="993" r="5.8" fill="url(#sg)"/><circle cx="1686" cy="944" r="11.5" fill="url(#sg)"/><circle cx="1275" cy="1099" r="5.8" fill="url(#sg)"/><circle cx="1464" cy="1096" r="4.6" fill="url(#sg)"/><circle cx="1310" cy="1145" r="5.8" fill="url(#sg)"/><circle cx="1260" cy="1154" r="4.6" fill="url(#sg)"/><circle cx="1534" cy="1157" r="8.0" fill="url(#sg)"/><circle cx="4" cy="400" r="9.2" fill="url(#sg)"/><rect x="36" y="92" width="6" height="226" fill="#561418"/><path d="M29 104 L29 88 A11 11 0 0 1 51 88 L51 104 Z" fill="#8a2a30"/><ellipse cx="40" cy="106" rx="11" ry="5" fill="#7a1a20"/><path d="M34 91 L46 91 M40 85 L40 97" stroke="#300" stroke-width="2"/><path d="M29 304 L51 304 L51 320 A11 11 0 0 1 29 320 Z" fill="#7a2025"/><path d="M34 317 L46 317" stroke="#300" stroke-width="2"/><circle cx="572.5" cy="808.2" r="13.6" fill="none" stroke="#e6ea50" stroke-width="5.6"/><circle cx="572.5" cy="808.2" r="4.6" fill="#eef0a8"/><circle cx="908" cy="591.5" r="18" fill="none" stroke="#a04070" stroke-opacity="0.45" stroke-width="3"/><circle cx="908" cy="591.5" r="15.5" fill="none" stroke="#d42a1e" stroke-width="3.2"/><circle cx="908" cy="591.5" r="12.5" fill="none" stroke="#e0b0b0" stroke-width="1.4"/><rect x="0" y="0" width="8" height="8" fill="#a85a78"/></svg>
<div class="t" style="left:1632px;top:792.0px;font-size:16px;line-height:16px;color:#ecebd8;">Lorenzin Theta AUR</div>
<div class="a" style="left:986px;top:428px;width:629px;height:560px;background:#323033;border:1px solid #3a393b"></div>
<div class="a" style="left:986px;top:428px;width:629px;height:40px;background:#fff"></div>
<svg class="a" style="left:998px;top:440px;" width="20" height="15" viewBox="0 0 20 15"><path d="M0.5 0.5 L7 0.5 L19 14 L12.5 14 Z" fill="#000"/><path d="M12 0.5 L19 0.5 L7 14 L0 14 Z" fill="#000"/><path d="M13 9.5 L15.5 14 L19.5 14 L16 9.5 Z" fill="#9a9aa8"/></svg>
<div class="t" style="left:1025px;top:440.5px;font-size:15px;line-height:15px;color:#222;">Telescope Star Synchronization</div>
<div class="a" style="left:1457px;top:447px;width:14px;height:1px;background:#333"></div>
<div class="a" style="left:1516px;top:441px;width:14px;height:13px;border:1px solid #bbb"></div>
<svg class="a" style="left:1575px;top:439px;" width="16" height="16" viewBox="0 0 16 16"><path d="M1 1 L15 15 M15 1 L1 15" stroke="#222" stroke-width="1.4"/></svg>
<div class="t" style="left:1015px;top:497.8px;font-size:15.4px;line-height:15.4px;color:#cfcfcf;font-weight:bold;letter-spacing:0px">Note: You are syncing the telescope with an existing TPoint model.</div>
<svg class="a" style="left:1014px;top:532px;" width="20" height="20" viewBox="0 0 20 20"><circle cx="10" cy="10" r="8.5" fill="#2a292b" stroke="#3c3b3d" stroke-width="1"/></svg>
<div class="t" style="left:1040.5px;top:527.5px;font-size:14px;line-height:14px;color:#cfcfcf;">Sync and start a Recalibration Run (A minimum of 15 pointing samples</div>
<div class="t" style="left:1040.5px;top:544.5px;font-size:14px;line-height:14px;color:#cfcfcf;">must be present in the original Pointing Data)</div>
<div class="t" style="left:1067.5px;top:572.8px;font-size:15.4px;line-height:15.4px;color:#cfcfcf;font-weight:bold">Selecting the Sync and Start a Recalibration Run option does</div>
<div class="t" style="left:1067.5px;top:589.8px;font-size:15.4px;line-height:15.4px;color:#cfcfcf;font-weight:bold">the following:</div>
<div class="t" style="left:1103px;top:623.5px;font-size:14px;line-height:14px;color:#cfcfcf;">1.</div>
<div class="t" style="left:1119px;top:623.5px;font-size:14px;line-height:14px;color:#cfcfcf;">Fixes all terms in the existing TPoint model <i>except</i> <b>IH</b> and <b>ID</b>.</div>
<div class="t" style="left:1103px;top:640.5px;font-size:14px;line-height:14px;color:#cfcfcf;">2.</div>
<div class="t" style="left:1119px;top:640.5px;font-size:14px;line-height:14px;color:#cfcfcf;">Adds new pointing samples to the <i>Recalibration Data</i>, not to the</div>
<div class="t" style="left:1119px;top:657.5px;font-size:14px;line-height:14px;color:#cfcfcf;"><i>Pointing Data</i>.</div>
<svg class="a" style="left:1014px;top:682px;" width="20" height="20" viewBox="0 0 20 20"><circle cx="10" cy="10" r="8.5" fill="#2a292b" stroke="#3c3b3d" stroke-width="1"/></svg>
<div class="t" style="left:1040.5px;top:686.5px;font-size:14px;line-height:14px;color:#cfcfcf;">Clear the existing calibration data and start a new Calibration Run.</div>
<svg class="a" style="left:1014px;top:715px;" width="20" height="20" viewBox="0 0 20 20"><circle cx="10" cy="10" r="8.5" fill="#2a292b" stroke="#3c3b3d" stroke-width="1"/><circle cx="10" cy="10" r="4" fill="#a8a8a8"/></svg>
<div class="t" style="left:1040.5px;top:719.5px;font-size:14px;line-height:14px;color:#cfcfcf;">Synchronize mount into the existing model.</div>
<div class="a" style="left:1193px;top:876px;width:60px;height:60px;background:linear-gradient(#3f3e40,#373638);border:1px solid #4c4b4d;border-radius:3px;"></div>
<svg class="a" style="left:1206px;top:880px;" width="30" height="30" viewBox="0 0 30 30"><g transform="translate(1,0)"><path d="M12 17 L12 25 M9 24 L12 20 L15 24" stroke="#000" stroke-width="2" fill="none"/><g transform="rotate(22 13 11)"><rect x="4.5" y="5" width="17" height="12" rx="1" fill="#fafafa" stroke="#000" stroke-width="1.3"/><path d="M10 5.5 L10 16.5 M16 5.5 L16 16.5" stroke="#ccc" stroke-width="0.8"/><rect x="13" y="1.5" width="7" height="3" fill="#eee" stroke="#000" stroke-width="1"/></g><polygon points="21.0,15.0 22.3,18.2 25.8,18.5 23.1,20.7 23.9,24.0 21.0,22.2 18.1,24.0 18.9,20.7 16.2,18.5 19.7,18.2" fill="#f6c36a" stroke="#e08a30" stroke-width="1"/></g></svg>
<div class="t" style="left:1205px;top:919.0px;font-size:14px;line-height:14px;color:#cfcfcf;"><span class="u">S</span>ync</div>
<svg class="a" style="left:1238px;top:903px;" width="16" height="26" viewBox="0 0 16 26"><path d="M1 1 L1 21 L6 16 L9.5 24 L12.5 22.5 L9 15 L15 15 Z" fill="#fff" stroke="#000" stroke-width="1.2"/></svg>
<div class="t" style="left:1261px;top:900.5px;font-size:14px;line-height:14px;color:#cfcfcf;">on&nbsp; Lorenzin Theta AUR</div>
<div class="a" style="left:1496px;top:947px;width:102px;height:25px;background:linear-gradient(#3f3e40,#373638);border:1px solid #4c4b4d;border-radius:3px;"></div>
<div class="t" style="left:1546px;top:952.5px;font-size:14px;line-height:14px;color:#cfcfcf;transform:translateX(-50%);">Close</div>
<svg class="a" style="left:1601px;top:975px;" width="12" height="12" viewBox="0 0 12 12"><rect x="9" y="0" width="1.5" height="1.5" fill="#777"/><rect x="6" y="3" width="1.5" height="1.5" fill="#777"/><rect x="9" y="3" width="1.5" height="1.5" fill="#777"/><rect x="3" y="6" width="1.5" height="1.5" fill="#777"/><rect x="6" y="6" width="1.5" height="1.5" fill="#777"/><rect x="9" y="6" width="1.5" height="1.5" fill="#777"/><rect x="0" y="9" width="1.5" height="1.5" fill="#777"/><rect x="3" y="9" width="1.5" height="1.5" fill="#777"/><rect x="6" y="9" width="1.5" height="1.5" fill="#777"/><rect x="9" y="9" width="1.5" height="1.5" fill="#777"/></svg>
<div class="a" style="left:755px;top:1144px;width:586px;height:224px;background:#323033;border:1px solid #3a393b"></div>
<div class="a" style="left:755px;top:1144px;width:586px;height:40px;background:#fff"></div>
<svg class="a" style="left:767px;top:1157px;" width="20" height="15" viewBox="0 0 20 15"><path d="M0.5 0.5 L7 0.5 L19 14 L12.5 14 Z" fill="#000"/><path d="M12 0.5 L19 0.5 L7 14 L0 14 Z" fill="#000"/><path d="M13 9.5 L15.5 14 L19.5 14 L16 9.5 Z" fill="#9a9aa8"/></svg>
<div class="t" style="left:793px;top:1156.0px;font-size:16px;line-height:16px;color:#8c8c8c;">Dome Communications Log</div>
<svg class="a" style="left:1313px;top:1156px;" width="16" height="16" viewBox="0 0 16 16"><path d="M1 1 L15 15 M15 1 L1 15" stroke="#8a8a8a" stroke-width="1.2"/></svg>
<div class="t" style="left:769px;top:1201.0px;font-size:14px;line-height:14px;color:#d4d4d4;">Packet, Retries, Failures</div>
<div class="a" style="left:770px;top:1223px;width:556px;height:92px;background:#3a393b;border:1px solid #333"></div>
<div class="a" style="left:771px;top:1226px;width:554px;height:70px;overflow:hidden">
<div class="t" style="left:-2px;top:6.8px;font-family:Liberation Mono;font-size:15.25px;line-height:16px;color:#cfcfcf">2020 21:21:32.100 [Tue Mar 31 21:21:32 2020] Shutter Openned</div>
<div class="t" style="left:-2px;top:25.2px;font-family:Liberation Mono;font-size:15.25px;line-height:16px;color:#cfcfcf">2020 21:22:08.181 [Tue Mar 31 21:22:08 2020] Shutter Opened</div>
<div class="t" style="left:-2px;top:43.599999999999994px;font-family:Liberation Mono;font-size:15.25px;line-height:16px;color:#cfcfcf">2020 21:22:14.962 [Tue Mar 31 21:22:14 2020] Shutter Opened</div>
</div>
<div class="a" style="left:771px;top:1297px;width:554px;height:17px;background:#2a292b"></div>
<div class="a" style="left:787px;top:1298px;width:100px;height:15px;background:#2d2c2e"></div>
<div class="a" style="left:887px;top:1298px;width:420px;height:15px;background:#3b3a3c;border:1px solid #454446;border-radius:2px"></div>
<svg class="a" style="left:773px;top:1299px;" width="12" height="12" viewBox="0 0 12 12"><path d="M9 1 L9 11 L3 6 Z" fill="#cfcfcf"/></svg>
<svg class="a" style="left:1310px;top:1299px;" width="12" height="12" viewBox="0 0 12 12"><path d="M3 1 L3 11 L9 6 Z" fill="#cfcfcf"/></svg>
<div class="a" style="left:771px;top:1326px;width:103px;height:25px;background:linear-gradient(#3f3e40,#373638);border:1px solid #4c4b4d;border-radius:3px;"></div>
<div class="t" style="left:822.5px;top:1331.0px;font-size:14px;line-height:14px;color:#cfcfcf;transform:translateX(-50%);"><span class="u">C</span>lear</div>
<div class="a" style="left:884px;top:1326px;width:102px;height:25px;background:linear-gradient(#3f3e40,#373638);border:1px solid #4c4b4d;border-radius:3px;"></div>
<div class="t" style="left:935.0px;top:1331.0px;font-size:14px;line-height:14px;color:#cfcfcf;transform:translateX(-50%);"><span class="u">P</span>ause</div>
<div class="a" style="left:997px;top:1326px;width:102px;height:25px;background:linear-gradient(#3f3e40,#373638);border:1px solid #4c4b4d;border-radius:3px;"></div>
<div class="t" style="left:1048.0px;top:1331.0px;font-size:14px;line-height:14px;color:#cfcfcf;transform:translateX(-50%);">C<span class="u">o</span>py</div>
<div class="a" style="left:1222px;top:1326px;width:103px;height:25px;background:linear-gradient(#3f3e40,#373638);border:1px solid #4c4b4d;border-radius:3px;"></div>
<div class="t" style="left:1273.5px;top:1331.0px;font-size:14px;line-height:14px;color:#cfcfcf;transform:translateX(-50%);">Close</div>
<svg class="a" style="left:1327px;top:1353px;" width="12" height="12" viewBox="0 0 12 12"><rect x="9" y="0" width="1.5" height="1.5" fill="#777"/><rect x="6" y="3" width="1.5" height="1.5" fill="#777"/><rect x="9" y="3" width="1.5" height="1.5" fill="#777"/><rect x="3" y="6" width="1.5" height="1.5" fill="#777"/><rect x="6" y="6" width="1.5" height="1.5" fill="#777"/><rect x="9" y="6" width="1.5" height="1.5" fill="#777"/><rect x="0" y="9" width="1.5" height="1.5" fill="#777"/><rect x="3" y="9" width="1.5" height="1.5" fill="#777"/><rect x="6" y="9" width="1.5" height="1.5" fill="#777"/><rect x="9" y="9" width="1.5" height="1.5" fill="#777"/></svg>
<svg class="a" style="left:692px;top:791px;" width="4" height="24" viewBox="0 0 4 24"><rect x="0" y="0" width="2" height="2" fill="#6e6d6f"/><rect x="0" y="4" width="2" height="2" fill="#6e6d6f"/><rect x="0" y="8" width="2" height="2" fill="#6e6d6f"/><rect x="0" y="12" width="2" height="2" fill="#6e6d6f"/><rect x="0" y="16" width="2" height="2" fill="#6e6d6f"/><rect x="0" y="20" width="2" height="2" fill="#6e6d6f"/></svg>
</body></html>
